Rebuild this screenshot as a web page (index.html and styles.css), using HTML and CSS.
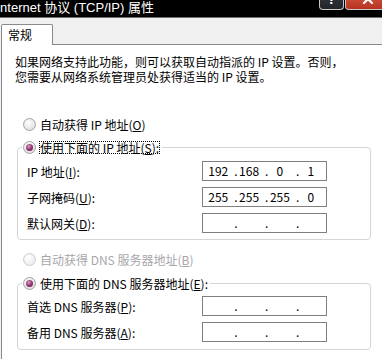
FILE: index.html
```html
<!DOCTYPE html>
<html lang="zh-CN">
<head>
    <meta charset="UTF-8">
    <meta name="viewport" content="width=device-width, initial-scale=1.0">
    <title>Internet 协议 (TCP/IP) 属性</title>
    <link rel="stylesheet" href="styles.css">
</head>
<body>
    <div class="window">
        <!-- 标题栏 -->
        <div class="titlebar">
            <span class="title">Internet 协议 (TCP/IP) 属性</span>
            <div class="caption-buttons">
                <span class="cap-btn help">?</span>
                <span class="cap-btn close">
                    <svg width="12" height="12" viewBox="0 0 12 12">
                        <path d="M2 2 L10 10 M10 2 L2 10" stroke="#fff" stroke-width="2.2" stroke-linecap="round"/>
                    </svg>
                </span>
            </div>
        </div>

        <!-- 选项卡 -->
        <div class="tabs">
            <div class="tab active">常规</div>
        </div>

        <div class="panel">
            <p class="intro">如果网络支持此功能，则可以获取自动指派的 IP 设置。否则，<br>您需要从网络系统管理员处获得适当的 IP 设置。</p>

            <label class="option">
                <span class="radio"></span>
                <span>自动获得 IP 地址(<u>O</u>)</span>
            </label>

            <fieldset class="group">
                <legend class="option">
                    <span class="radio on"></span>
                    <span class="focus">使用下面的 IP 地址(<u>S</u>):</span>
                </legend>
                <div class="field-row">
                    <span class="field-label">IP 地址(<u>I</u>):</span>
                    <div class="ip-box">
                        <span class="octet">192</span><span class="dot">.</span>
                        <span class="octet">168</span><span class="dot">.</span>
                        <span class="octet">0</span><span class="dot">.</span>
                        <span class="octet">1</span>
                    </div>
                </div>
                <div class="field-row">
                    <span class="field-label">子网掩码(<u>U</u>):</span>
                    <div class="ip-box">
                        <span class="octet">255</span><span class="dot">.</span>
                        <span class="octet">255</span><span class="dot">.</span>
                        <span class="octet">255</span><span class="dot">.</span>
                        <span class="octet">0</span>
                    </div>
                </div>
                <div class="field-row">
                    <span class="field-label">默认网关(<u>D</u>):</span>
                    <div class="ip-box">
                        <span class="octet"></span><span class="dot">.</span>
                        <span class="octet"></span><span class="dot">.</span>
                        <span class="octet"></span><span class="dot">.</span>
                        <span class="octet"></span>
                    </div>
                </div>
            </fieldset>

            <label class="option option-dns disabled">
                <span class="radio"></span>
                <span>自动获得 DNS 服务器地址(<u>B</u>)</span>
            </label>

            <fieldset class="group group-dns">
                <legend class="option">
                    <span class="radio on"></span>
                    <span>使用下面的 DNS 服务器地址(<u>E</u>):</span>
                </legend>
                <div class="field-row">
                    <span class="field-label">首选 DNS 服务器(<u>P</u>):</span>
                    <div class="ip-box">
                        <span class="octet"></span><span class="dot">.</span>
                        <span class="octet"></span><span class="dot">.</span>
                        <span class="octet"></span><span class="dot">.</span>
                        <span class="octet"></span>
                    </div>
                </div>
                <div class="field-row">
                    <span class="field-label">备用 DNS 服务器(<u>A</u>):</span>
                    <div class="ip-box">
                        <span class="octet"></span><span class="dot">.</span>
                        <span class="octet"></span><span class="dot">.</span>
                        <span class="octet"></span><span class="dot">.</span>
                        <span class="octet"></span>
                    </div>
                </div>
            </fieldset>
        </div>
    </div>
</body>
</html>
```

FILE: styles.css
```css
/* 重置默认样式 */
* {
    margin: 0;
    padding: 0;
    box-sizing: border-box;
}

html,
body {
    height: 100%;
    overflow: hidden;
}

body {
    background-color: #f0f0f0;
    color: #000;
    font-family: "Noto Sans CJK SC", sans-serif;
    font-size: 12px;
    line-height: 15px;
}

/* 标题栏 */
.titlebar {
    height: 18px;
    background: #000;
    border-bottom: 1px solid #707070;
    display: flex;
    justify-content: space-between;
    align-items: flex-start;
}

.title {
    color: #fff;
    font-family: "Liberation Sans", "Noto Sans CJK SC", sans-serif;
    font-size: 13px;
    line-height: 16px;
    text-indent: -3.5px;
    white-space: nowrap;
}

.caption-buttons {
    display: flex;
    gap: 1px;
    margin-top: -11px;
    margin-right: -8px;
}

.cap-btn {
    height: 21px;
    border: 1px solid #c8c8c8;
    border-top: none;
    border-radius: 0 0 4px 4px;
    display: flex;
    justify-content: center;
    align-items: center;
    color: #fff;
    font-family: "Liberation Sans", sans-serif;
    font-weight: bold;
    font-size: 14px;
}

.cap-btn.help {
    width: 25px;
    background: linear-gradient(#3a3d44, #23252a);
}

.cap-btn.close {
    width: 45px;
    background: linear-gradient(#d8624c, #b8331f);
}

/* 选项卡 */
.tabs {
    display: flex;
    padding-top: 6px;
    margin-bottom: -1px;
    margin-left: 1px;
}

.tab {
    position: relative;
    width: 52px;
    height: 21px;
    padding: 2px 0 0 6px;
    background: #fff;
    border: 1px solid #8a8a8a;
    border-bottom: none;
    border-radius: 2px 2px 0 0;
}

/* 内容面板 */
.panel {
    margin-left: 1px;
    height: 400px;
    background: #fff;
    border-top: 1px solid #8a8a8a;
    border-left: 1px solid #8a8a8a;
}

.intro {
    padding: 9px 0 0 13px;
    white-space: nowrap;
}

.option {
    display: flex;
    align-items: center;
    gap: 4px;
    height: 15px;
    margin: 33px 0 0 21px;
    white-space: nowrap;
}

.option.disabled {
    color: #a7a6aa;
}

.option-dns {
    margin-top: 12px;
}

/* 单选按钮 */
.radio {
    position: relative;
    flex: none;
    width: 13px;
    height: 13px;
    border-radius: 50%;
    border: 1px solid #a4a4a4;
    background: radial-gradient(circle at 40% 35%, #ffffff, #e2e2e2 70%, #cfcfcf);
}

.disabled .radio {
    border-color: #cdcdcd;
    background: radial-gradient(circle at 40% 35%, #ffffff, #ededed 70%);
}

.radio.on::after {
    content: "";
    position: absolute;
    left: 2px;
    top: 2px;
    width: 7px;
    height: 7px;
    border-radius: 50%;
    background: radial-gradient(circle at 40% 35%, #d79bc4, #8b2d68 55%, #5c1442);
}

.focus {
    margin-left: -1px;
    line-height: 11px;
    border: 1px dotted #000;
}

/* 分组框 */
.group {
    margin: 8px 0 0 15px;
    width: 354px;
    padding: 6px 0 6px 4px;
    border: 1px solid #d5d5d5;
    border-radius: 4px;
    display: flex;
    flex-direction: column;
    gap: 6px;
}

.group legend.option {
    margin: 0;
    padding: 0 2px 0 1px;
}

.group-dns {
    margin-top: 9px;
    padding-top: 5px;
    padding-bottom: 7px;
}

.field-row {
    display: flex;
    align-items: center;
    margin-left: 5px;
}

.field-label {
    width: 175px;
    white-space: nowrap;
}

/* IP 地址输入框 */
.ip-box {
    width: 125px;
    height: 20px;
    padding-left: 4.5px;
    border: 1px solid #7f7f7f;
    background: #fff;
    display: flex;
    line-height: 18px;
}

.octet {
    width: 26.5px;
    padding-right: 4.5px;
    text-align: center;
}

.dot {
    width: 5px;
    text-align: center;
}
```
